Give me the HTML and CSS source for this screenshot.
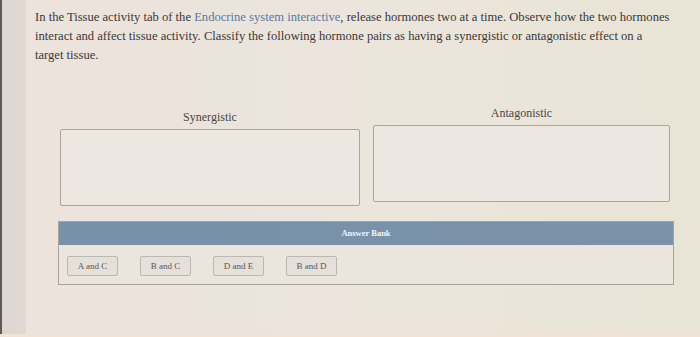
FILE: index.html
```html
<!DOCTYPE html>
<html>
<head>
<meta charset="utf-8">
<link rel="stylesheet" href="styles.css">
</head>
<body>
<div class="screen">
  <div class="edge"></div>
  <div class="strip"></div>
  <div class="panel">
    <p class="question">In the Tissue activity tab of the <span class="link">Endocrine system interactive</span>, release hormones two at a time. Observe how the two hormones interact and affect tissue activity. Classify the following hormone pairs as having a synergistic or antagonistic effect on a target tissue.</p>
    <div class="cats">
      <div class="cat">
        <div class="cat-label">Synergistic</div>
        <div class="drop"></div>
      </div>
      <div class="cat cat-right">
        <div class="cat-label">Antagonistic</div>
        <div class="drop"></div>
      </div>
    </div>
    <div class="bank">
      <div class="bank-head">Answer Bank</div>
      <div class="bank-body">
        <div class="chip">A and C</div>
        <div class="chip">B and C</div>
        <div class="chip">D and E</div>
        <div class="chip">B and D</div>
      </div>
    </div>
  </div>
</div>
<div class="bottom"></div>
</body>
</html>
```

FILE: styles.css
```css
html, body {
  margin: 0;
  padding: 0;
}
body {
  width: 700px;
  height: 337px;
  overflow: hidden;
  background: #ebe3dc;
  font-family: "Liberation Serif", "Times New Roman", serif;
}
.screen {
  display: flex;
  height: 334px;
}
.edge {
  width: 2px;
  background: #615956;
}
.strip {
  width: 24px;
  background: linear-gradient(90deg, #ddd5d0, #e1d9d3);
}
.panel {
  flex: 1;
  background: linear-gradient(90deg, #ebe3dc 0%, #ece5dc 50%, #e8e4d6 100%);
  padding: 0 0 0 9px;
}
.question {
  margin: 8px 0 0 0;
  width: 637px;
  font-size: 12.6px;
  line-height: 19px;
  color: #3b3838;
}
.link {
  color: #5b77a6;
}
.cats {
  display: flex;
  gap: 13px;
  margin: 45px 0 0 25px;
}
.cat {
  display: flex;
  flex-direction: column;
  align-items: center;
  width: 300px;
}
.cat-right {
  width: 297px;
  margin-top: -4px;
}
.cat-label {
  font-size: 12px;
  line-height: 14px;
  color: #4a4545;
  margin-bottom: 5px;
}
.drop {
  align-self: stretch;
  height: 75px;
  border: 1px solid #a9a5a0;
  border-radius: 2px;
  background: #ede7e1;
}
.bank {
  margin: 15px 0 0 23px;
  width: 614px;
  border: 1px solid #a7a39f;
}
.bank-head {
  height: 23px;
  background: linear-gradient(90deg, #7890aa, #7b92a8);
  color: #f4f4f6;
  font-size: 8.5px;
  font-weight: bold;
  text-align: center;
  line-height: 22px;
}
.bank-body {
  display: flex;
  gap: 22px;
  padding: 11px 9px 8px 8px;
  background: #ebe5de;
}
.chip {
  width: 49px;
  height: 18px;
  border: 1px solid #bdb7b1;
  border-radius: 2px;
  background: #e6e0da;
  color: #5a5555;
  font-size: 9px;
  line-height: 18px;
  text-align: center;
}
.bottom {
  height: 3px;
  background: #f2e2d3;
}
```
